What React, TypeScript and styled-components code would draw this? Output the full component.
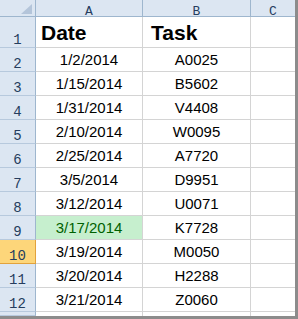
import React from "react";
import styled, { createGlobalStyle } from "styled-components";

const GlobalStyle = createGlobalStyle`
    html, body {
        margin: 0;
        padding: 0;
        background: #ffffff;
    }
`;

const rows: [string, string][] = [
    ["1/2/2014", "A0025"],
    ["1/15/2014", "B5602"],
    ["1/31/2014", "V4408"],
    ["2/10/2014", "W0095"],
    ["2/25/2014", "A7720"],
    ["3/5/2014", "D9951"],
    ["3/12/2014", "U0071"],
    ["3/17/2014", "K7728"],
    ["3/19/2014", "M0050"],
    ["3/20/2014", "H2288"],
    ["3/21/2014", "Z0060"],
];

const Sheet = styled.div`
    box-sizing: content-box;
    width: 295px;
    height: 316px;
    display: grid;
    grid-template-columns: 36px 107px 108px 44px;
    grid-template-rows: 17px 31px repeat(11, 24px) 4px;
    border-right: 3px solid #8c8c8c;
    border-bottom: 3px solid #8c8c8c;
    overflow: hidden;
    background: #ffffff;
`;

const Corner = styled.div`
    box-sizing: border-box;
    display: flex;
    justify-content: flex-end;
    align-items: flex-end;
    padding: 0 3px 2px 0;
    background: #dce6f2;
    border-right: 1px solid #9eb6ce;
    border-bottom: 1px solid #9eb6ce;

    &::after {
        content: "";
        width: 0;
        height: 0;
        border-left: 11px solid transparent;
        border-bottom: 10px solid #b4c5da;
    }
`;

const ColHeader = styled.div<{ $last?: boolean }>`
    box-sizing: border-box;
    display: flex;
    justify-content: center;
    align-items: flex-end;
    background: #dce6f2;
    border-right: ${(p) => (p.$last ? "none" : "1px solid #9eb6ce")};
    border-bottom: 1px solid #9eb6ce;
    color: #253d5e;
    font-family: "Liberation Mono", monospace;
    font-size: 13px;
    line-height: 9px;
`;

const RowHeader = styled.div<{ $active?: boolean }>`
    box-sizing: border-box;
    display: flex;
    justify-content: center;
    align-items: flex-end;
    background: ${(p) => (p.$active ? "#fdd67a" : "#dce6f2")};
    border-right: 1px solid ${(p) => (p.$active ? "#e2a23c" : "#9eb6ce")};
    border-bottom: 1px solid ${(p) => (p.$active ? "#e2a23c" : "#b7c9dd")};
    color: #253d5e;
    font-family: "Liberation Mono", monospace;
    font-size: 14px;
    line-height: 14px;
`;

const Cell = styled.div<{ $head?: boolean; $pad?: number; $good?: boolean; $last?: boolean }>`
    box-sizing: border-box;
    display: flex;
    justify-content: ${(p) => (p.$head ? "flex-start" : "center")};
    align-items: flex-end;
    padding: 0 0 4px ${(p) => p.$pad ?? 0}px;
    background: ${(p) => (p.$good ? "#c6efce" : "#ffffff")};
    border-right: ${(p) => (p.$last ? "none" : "1px solid #d4d4d4")};
    border-bottom: 1px solid #d4d4d4;
    color: ${(p) => (p.$good ? "#006100" : "#000000")};
    font-family: "Liberation Sans", Arial, sans-serif;
    font-size: ${(p) => (p.$head ? 21 : 15)}px;
    font-weight: ${(p) => (p.$head ? 700 : 400)};
    line-height: ${(p) => (p.$head ? 21 : 15)}px;
    white-space: nowrap;
`;

export default function App() {
    return (
        <>
            <GlobalStyle />
            <Sheet>
                <Corner />
                <ColHeader>A</ColHeader>
                <ColHeader>B</ColHeader>
                <ColHeader $last>C</ColHeader>

                <RowHeader>1</RowHeader>
                <Cell $head $pad={5}>Date</Cell>
                <Cell $head $pad={8}>Task</Cell>
                <Cell $last />

                {rows.map(([date, task], i) => (
                    <React.Fragment key={date}>
                        <RowHeader $active={i + 2 === 10}>{i + 2}</RowHeader>
                        <Cell $good={i + 2 === 9}>{date}</Cell>
                        <Cell>{task}</Cell>
                        <Cell $last />
                    </React.Fragment>
                ))}

                <RowHeader />
                <Cell />
                <Cell />
                <Cell $last />
            </Sheet>
        </>
    );
}
